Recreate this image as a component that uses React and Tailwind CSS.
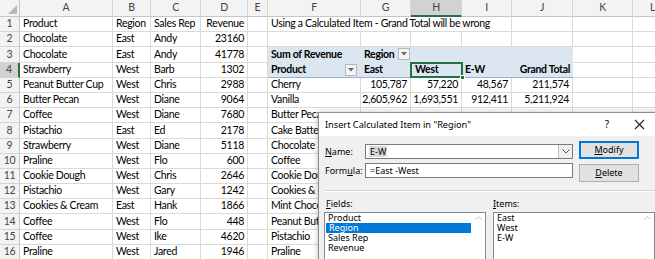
import React from "react";

const W = [93, 38, 50, 47, 20, 93, 50, 51, 50, 61, 60, 40];
const LETTERS = ["A", "B", "C", "D", "E", "F", "G", "H", "I", "J", "K", "L"];

const left = [
  ["Product", "Region", "Sales Rep", "Revenue"],
  ["Chocolate", "East", "Andy", "23160"],
  ["Chocolate", "East", "Andy", "41778"],
  ["Strawberry", "West", "Barb", "1302"],
  ["Peanut Butter Cup", "West", "Chris", "2988"],
  ["Butter Pecan", "West", "Diane", "9064"],
  ["Coffee", "West", "Diane", "7680"],
  ["Pistachio", "East", "Ed", "2178"],
  ["Strawberry", "West", "Diane", "5118"],
  ["Praline", "West", "Flo", "600"],
  ["Cookie Dough", "West", "Chris", "2646"],
  ["Pistachio", "West", "Gary", "1242"],
  ["Cookies & Cream", "East", "Hank", "1866"],
  ["Coffee", "West", "Flo", "448"],
  ["Coffee", "West", "Ike", "4620"],
  ["Praline", "West", "Jared", "1946"],
];

const pivotLabels = {
  5: ["Cherry", "105,787", "57,220", "48,567", "211,574"],
  6: ["Vanilla", "2,605,962", "1,693,551", "912,411", "5,211,924"],
  7: ["Butter Pecan"],
  8: ["Cake Batter"],
  9: ["Chocolate"],
  10: ["Coffee"],
  11: ["Cookie Dough"],
  12: ["Cookies & Cream"],
  13: ["Mint Chocolate Chip"],
  14: ["Peanut Butter Cup"],
  15: ["Pistachio"],
  16: ["Praline"],
};

const cellBase = "h-full shrink-0 border-r border-b border-[#dadada] px-[3px] flex items-center whitespace-nowrap overflow-hidden";

function DropBtn() {
  return (
    <span className="ml-auto mr-[1px] w-[12px] h-[12px] border border-[#b8b8b8] bg-[#f4f4f4] flex items-center justify-center shrink-0">
      <svg width="6" height="4" viewBox="0 0 6 4"><path d="M0 0H6L3 3.5Z" fill="#666" /></svg>
    </span>
  );
}

function Cell({ w, children, className = "" }) {
  return (
    <div className={`${cellBase} ${className}`} style={{ width: w }}>
      {children}
    </div>
  );
}

function Row({ n }) {
  const d = left[n - 1];
  const selRow = n === 4;
  const rowHdr = (
    <div
      className={`h-full w-[20px] shrink-0 flex items-center justify-center text-[#444] border-b border-[#d4d4d4] ${
        selRow ? "bg-[#d2d2d2] border-r-2 border-r-[#217346]" : "bg-[#f3f3f3] border-r border-r-[#c6c6c6]"
      }`}
    >
      {n}
    </div>
  );
  const leftCells = (
    <>
      <Cell w={W[0]}>{d[0]}</Cell>
      <Cell w={W[1]}>{d[1]}</Cell>
      <Cell w={W[2]}>{d[2]}</Cell>
      <Cell w={W[3]} className="justify-end">{d[3]}</Cell>
      <Cell w={W[4]} />
    </>
  );
  let right;
  if (n === 1) {
    right = (
      <>
        <Cell w={W[5] + W[6] + W[7] + W[8]} className="overflow-visible">
          Using a Calculated Item - Grand Total will be wrong
        </Cell>
        <Cell w={W[9]} />
        <Cell w={W[10]} />
        <Cell w={W[11]} />
      </>
    );
  } else if (n === 3) {
    right = (
      <>
        <div className="h-full shrink-0 flex items-center whitespace-nowrap bg-[#dce6f1] border-b border-b-[#dce6f1] px-[3px] font-bold" style={{ width: W[5] }}>
          Sum of Revenue
        </div>
        <div className="h-full shrink-0 flex items-center whitespace-nowrap bg-[#dce6f1] border-b border-b-[#dce6f1] pl-[3px] font-bold" style={{ width: W[6] }}>
          Region
          <DropBtn />
        </div>
        <div className="h-full shrink-0 bg-[#dce6f1] border-b border-b-[#dce6f1]" style={{ width: W[7] + W[8] + W[9] }} />
        <Cell w={W[10]} />
        <Cell w={W[11]} />
      </>
    );
  } else if (n === 4) {
    const pc = "h-full shrink-0 flex items-center whitespace-nowrap bg-[#dce6f1] border-b border-b-[#95b3d7] px-[3px] font-bold";
    right = (
      <>
        <div className={pc} style={{ width: W[5] }}>
          Product
          <DropBtn />
        </div>
        <div className={pc} style={{ width: W[6] }}>East</div>
        <div className="relative h-full shrink-0 flex items-center whitespace-nowrap bg-[#dce6f1] border-b border-b-[#95b3d7] font-bold" style={{ width: W[7] }}>
          <div className="absolute left-[-1px] top-[-1px] right-[-1px] bottom-[-1px] border-2 border-[#217346]" />
          <div className="absolute right-[-3px] bottom-[-3px] w-[5px] h-[5px] bg-[#217346] border border-white" />
          <span className="pl-[4px]">West</span>
        </div>
        <div className={pc} style={{ width: W[8] }}>E-W</div>
        <div className={`${pc} justify-end`} style={{ width: W[9] }}>Grand Total</div>
        <Cell w={W[10]} />
        <Cell w={W[11]} />
      </>
    );
  } else if (n === 5 || n === 6) {
    const p = pivotLabels[n];
    right = (
      <>
        <Cell w={W[5]}>{p[0]}</Cell>
        <Cell w={W[6]} className="justify-end">{p[1]}</Cell>
        <Cell w={W[7]} className="justify-end">{p[2]}</Cell>
        <Cell w={W[8]} className="justify-end">{p[3]}</Cell>
        <Cell w={W[9]} className="justify-end">{p[4]}</Cell>
        <Cell w={W[10]} />
        <Cell w={W[11]} />
      </>
    );
  } else {
    const p = pivotLabels[n];
    right = (
      <>
        <Cell w={W[5]}>{p ? p[0] : ""}</Cell>
        {W.slice(6).map((w, i) => (
          <Cell key={i} w={w} />
        ))}
      </>
    );
  }
  return (
    <div className="flex h-[15.2px]">
      {rowHdr}
      {leftCells}
      {right}
    </div>
  );
}

function Dialog() {
  return (
    <div
      className="absolute left-[318px] top-[112px] w-[360px] h-[170px] border border-[#8c8c8c] bg-[#f0f0f0] shadow-[0_0_6px_rgba(0,0,0,0.25)] flex flex-col text-[9px] text-black tracking-normal"
      style={{ fontFamily: "'Noto Sans', 'Open Sans', sans-serif" }}
    >
      <div className="h-[23px] bg-white flex items-center pl-[6px] shrink-0 whitespace-nowrap">
        <span className="text-[9.2px]">Insert Calculated Item in "Region"</span>
        <span className="ml-auto mr-[25px] text-[10px]">?</span>
        <svg className="mr-[32px]" width="11" height="11" viewBox="0 0 11 11">
          <path d="M1 1L10 10M10 1L1 10" stroke="#222" strokeWidth="1.1" />
        </svg>
      </div>
      <div className="flex pl-[6px] pt-[5px] gap-[6px] whitespace-nowrap">
        <div className="flex flex-col gap-[4px] pt-[3px]">
          <div className="flex items-center h-[15px]">
            <span className="w-[40px]"><u>N</u>ame:</span>
            <div className="w-[208px] h-[15px] border border-[#7a7a7a] bg-white flex items-center">
              <span className="ml-[3px] bg-[#d9d9d9] px-[1px] leading-[11px]">E-W</span>
              <span className="ml-auto h-full w-[14px] border-l border-[#bdbdbd] bg-[#f0f0f0] flex items-center justify-center">
                <svg width="8" height="5" viewBox="0 0 8 5"><path d="M0.5 0.5L4 4L7.5 0.5" stroke="#555" fill="none" strokeWidth="1" /></svg>
              </span>
            </div>
          </div>
          <div className="flex items-center h-[15px]">
            <span className="w-[40px]">Form<u>u</u>la:</span>
            <div className="w-[208px] h-[15px] border border-[#7a7a7a] bg-white flex items-center">
              <span className="ml-[4px]">=East -West</span>
            </div>
          </div>
        </div>
        <div className="flex flex-col gap-[5px]">
          <div className="w-[60px] h-[18px] border-2 border-[#0078d7] bg-[#e1e1e1] flex items-center justify-center">
            <span><u>M</u>odify</span>
          </div>
          <div className="w-[60px] h-[18px] border border-[#adadad] bg-[#e1e1e1] flex items-center justify-center">
            <span><u>D</u>elete</span>
          </div>
        </div>
      </div>
      <div className="mt-[8px] ml-[5px] h-0 border-t border-[#d6d6d6] border-b border-b-white" />
      <div className="flex pl-[5px] pt-[6px] gap-[7px] whitespace-nowrap">
        <div className="flex flex-col w-[162px]">
          <span className="pl-[2px] leading-[12px]"><u>F</u>ields:</span>
          <div className="mt-[2px] h-[60px] border border-[#828790] bg-white flex">
            <div className="flex-1 flex flex-col pt-[0px] leading-[10px]">
              <span className="pl-[3px] h-[10px]">Product</span>
              <span className="pl-[3px] h-[10px] mx-[1px] bg-[#0078d7] text-white">Region</span>
              <span className="pl-[3px] h-[10px]">Sales Rep</span>
              <span className="pl-[3px] h-[10px]">Revenue</span>
            </div>
            <div className="w-[13px] bg-white flex justify-center pt-[3px]">
              <svg width="7" height="4" viewBox="0 0 7 4"><path d="M0.5 3.5L3.5 0.5L6.5 3.5" stroke="#c2c2c2" fill="none" /></svg>
            </div>
          </div>
        </div>
        <div className="flex flex-col w-[162px]">
          <span className="leading-[12px]"><u>I</u>tems:</span>
          <div className="mt-[2px] h-[60px] border border-[#828790] bg-white flex">
            <div className="flex-1 flex flex-col pt-[0px] leading-[10px]">
              <span className="pl-[3px] h-[10px]">East</span>
              <span className="pl-[3px] h-[10px]">West</span>
              <span className="pl-[3px] h-[10px]">E-W</span>
            </div>
            <div className="w-[13px] bg-white flex justify-center pt-[3px]">
              <svg width="7" height="4" viewBox="0 0 7 4"><path d="M0.5 3.5L3.5 0.5L6.5 3.5" stroke="#c2c2c2" fill="none" /></svg>
            </div>
          </div>
        </div>
      </div>
    </div>
  );
}

export default function App() {
  return (
    <div
      className="relative w-[655px] h-[259px] overflow-hidden bg-white text-[10.5px] tracking-[-0.3px] text-black"
      style={{ fontFamily: "Lato, 'Liberation Sans', sans-serif" }}
    >
      <div className="flex h-[17px]">
        <div className="w-[20px] h-full shrink-0 bg-[#f3f3f3] border-r border-b border-[#c6c6c6] relative">
          <svg className="absolute right-[2px] bottom-[2px]" width="9" height="9" viewBox="0 0 9 9">
            <path d="M9 0V9H0Z" fill="#b8b8b8" />
          </svg>
        </div>
        {W.map((w, i) => (
          <div
            key={i}
            className={`h-full shrink-0 flex items-center justify-center text-[#444] border-r border-[#d4d4d4] ${
              i === 7 ? "bg-[#d2d2d2] border-b-2 border-b-[#217346]" : "bg-[#f3f3f3] border-b border-b-[#c6c6c6]"
            }`}
            style={{ width: w }}
          >
            {LETTERS[i]}
          </div>
        ))}
      </div>
      {left.map((_, i) => (
        <Row key={i} n={i + 1} />
      ))}
      <Dialog />
    </div>
  );
}
